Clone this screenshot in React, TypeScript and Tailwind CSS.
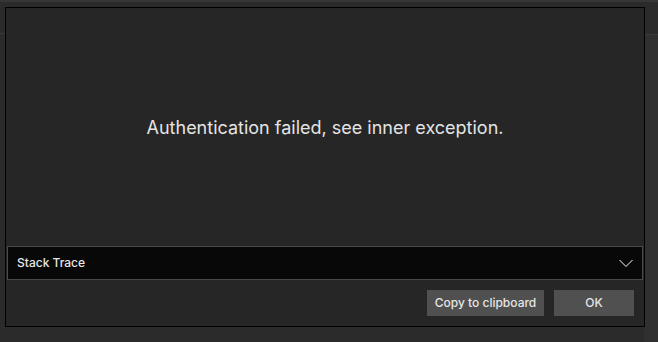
const font = { fontFamily: "Inter, 'Noto Sans', sans-serif" };

export default function App() {
  return (
    <div className="relative h-[342px] w-[658px] overflow-hidden bg-[#2b2b2b]" style={font}>
      {/* background window chrome */}
      <div className="h-[2px] bg-[#363636]" />
      <div className="absolute left-0 top-[33px] h-px w-[6px] bg-[#3a3a3a]" />
      <div className="absolute right-0 top-[34px] h-[308px] w-[14px] border-t border-[#3a3a3a] bg-[#303030]" />

      {/* dialog */}
      <div className="absolute left-[5px] top-[7px] flex h-[320px] w-[640px] flex-col border border-black bg-[#262626]">
        <div className="flex flex-1 items-center justify-center">
          <p className="text-[18px] text-[#e4e4e4]">Authentication failed, see inner exception.</p>
        </div>

        <div className="mx-px flex h-[34px] items-center justify-between border border-[#4a4a4a] bg-[#080808] pl-[9px] pr-[8px]">
          <span className="text-[12px] font-medium text-[#e6e6e6]">Stack Trace</span>
          <svg width="16" height="9" viewBox="0 0 16 9" className="text-white">
            <path d="M1.5 1 L8 7.5 L14.5 1" fill="none" stroke="currentColor" strokeWidth="1" />
          </svg>
        </div>

        <div className="flex justify-end gap-[10px] px-[10px] pb-[10px] pt-[10px]">
          <button className="h-[26px] w-[117px] bg-[#505050] text-[12px] font-medium text-[#e6e6e6]">
            Copy to clipboard
          </button>
          <button className="h-[26px] w-[80px] bg-[#505050] text-[12px] font-medium text-[#e6e6e6]">
            OK
          </button>
        </div>
      </div>
    </div>
  );
}
